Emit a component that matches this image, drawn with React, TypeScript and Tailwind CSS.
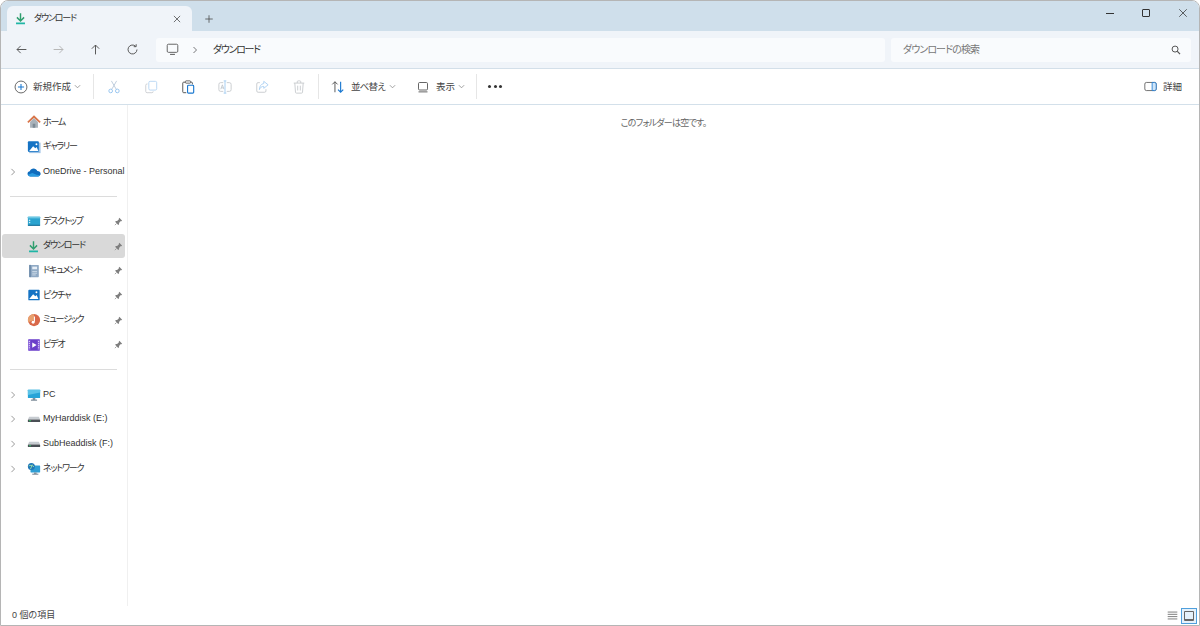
import type { ReactNode } from "react";

const FONT = "font-['Liberation_Sans','Noto_Sans_CJK_JP',sans-serif] [font-feature-settings:'palt']";

function Svg({ size = 16, className = "", children }: { size?: number; className?: string; children: ReactNode }) {
  return (
    <svg width={size} height={size} viewBox="0 0 16 16" fill="none" className={`shrink-0 ${className}`}>
      {children}
    </svg>
  );
}

function DownloadIcon({ size = 14 }: { size?: number }) {
  return (
    <Svg size={size}>
      <path d="M8 1.5V10.5M3.6 6.6L8 11L12.4 6.6" stroke="#2f9e6e" strokeWidth="1.8" />
      <path d="M2.5 14H13.5" stroke="#1fb6a6" strokeWidth="2" />
    </Svg>
  );
}

function Chevron({ dim = false }: { dim?: boolean }) {
  return (
    <Svg size={10}>
      <path d="M5.5 3L10.5 8L5.5 13" stroke={dim ? "#8a8a8a" : "#555"} strokeWidth="1.4" />
    </Svg>
  );
}

function Caret() {
  return (
    <Svg size={7}>
      <path d="M2 5L8 11L14 5" stroke="#888" strokeWidth="1.8" />
    </Svg>
  );
}

function NavArrow({ d, color = "#555" }: { d: string; color?: string }) {
  return (
    <div className="flex w-[37px] justify-center">
      <Svg size={13}>
        <path d={d} stroke={color} strokeWidth="1.2" />
      </Svg>
    </div>
  );
}

function HomeIcon() {
  return (
    <Svg size={14}>
      <path d="M3.5 8V14.5H12.5V8L8 3.5Z" fill="#a9b2ba" />
      <path d="M6.5 14.5V10H9.5V14.5Z" fill="#7d8a95" />
      <path d="M1 8.5L8 1.8L15 8.5" stroke="#d9764a" strokeWidth="2" />
    </Svg>
  );
}

function PictureIcon({ back = false }: { back?: boolean }) {
  return (
    <Svg size={14}>
      {back && <rect x="2.5" y="3" width="13" height="12" fill="#9fc3e6" />}
      <rect x={back ? 1 : 1.5} y={back ? 1.5 : 2} width={back ? 12.5 : 13} height={back ? 12 : 12} rx="1" fill="#1573c4" />
      <path d="M2.5 12.5L7 7L9.5 9.5L11 8L13 12.5Z" fill="#fff" />
      <circle cx="10.8" cy="4.8" r="1.1" fill="#fff" />
    </Svg>
  );
}

function CloudIcon() {
  return (
    <Svg size={14}>
      <path d="M4 13C1.8 13 .6 11.5.6 10C.6 8.4 1.8 7.3 3.2 7.2C3.9 5.2 5.6 4 7.6 4C9.5 4 11 5 11.8 6.8C14 6.8 15.6 8.3 15.6 10C15.6 11.7 14.3 13 12.4 13Z" fill="#0f6cbd" />
      <path d="M4 13C2.5 13 1.4 12.2 1 11.2L6 9L11 11L14.8 11.6C14.2 12.5 13.4 13 12.4 13Z" fill="#2a9be0" />
    </Svg>
  );
}

function DesktopIcon() {
  return (
    <Svg size={14}>
      <rect x="1" y="3" width="14" height="10.5" rx="0.8" fill="#2aa3cf" />
      <rect x="1" y="3" width="14" height="2" fill="#6cc7e3" />
      <rect x="2.2" y="6.5" width="1.5" height="1.5" fill="#d5f0f8" />
      <rect x="2.2" y="9" width="1.5" height="1.5" fill="#d5f0f8" />
      <rect x="1" y="12.3" width="14" height="1.2" fill="#1b6f96" />
    </Svg>
  );
}

function DocIcon() {
  return (
    <Svg size={14}>
      <rect x="2.5" y="1" width="11" height="14" rx="0.8" fill="#8fa9c4" />
      <rect x="2.5" y="1" width="2" height="14" fill="#6f8cab" />
      <rect x="6" y="3" width="5.5" height="3" fill="#e6eef6" />
      <path d="M6 8.5H11.5M6 10.5H11.5M6 12.5H10" stroke="#dbe6f0" strokeWidth="0.9" />
    </Svg>
  );
}

function MusicIcon() {
  return (
    <Svg size={14}>
      <circle cx="8" cy="8" r="7" fill="#d9694a" />
      <path d="M8 1A7 7 0 0 0 1.5 10.5L8 8Z" fill="#e8a06e" />
      <path d="M8.5 4V10" stroke="#fff" strokeWidth="1.2" />
      <circle cx="7" cy="10.5" r="1.7" fill="#fff" />
    </Svg>
  );
}

function VideoIcon() {
  return (
    <Svg size={14}>
      <rect x="1.5" y="1.5" width="13" height="13" rx="1" fill="#6b3fc9" />
      <rect x="1.5" y="1.5" width="2.4" height="13" fill="#8a63dd" />
      <rect x="12.1" y="1.5" width="2.4" height="13" fill="#8a63dd" />
      <path d="M6 5L11 8L6 11Z" fill="#fff" />
      <path d="M2.7 3.5V12.5M13.3 3.5V12.5" stroke="#fff" strokeWidth="1" strokeDasharray="1 1.4" />
    </Svg>
  );
}

function PcIcon() {
  return (
    <Svg size={14}>
      <rect x="1" y="2" width="14" height="9.5" rx="0.6" fill="#27a4d8" />
      <path d="M1 2H15V5L1 8Z" fill="#5cc3e8" />
      <rect x="6.5" y="11.5" width="3" height="2" fill="#7b8c99" />
      <rect x="4.5" y="13.3" width="7" height="1.1" fill="#5e7080" />
    </Svg>
  );
}

function DiskIcon() {
  return (
    <Svg size={14}>
      <path d="M2.5 5.5H13.5L15 8.5H1Z" fill="#c7ccd1" />
      <rect x="1" y="8.5" width="14" height="3" rx="0.5" fill="#4a4f55" />
      <rect x="2.2" y="9.5" width="2.4" height="1" fill="#3bd16f" />
    </Svg>
  );
}

function NetworkIcon() {
  return (
    <Svg size={14}>
      <rect x="4" y="4" width="11" height="8" rx="0.5" fill="#2f9ed4" />
      <rect x="8" y="12" width="3" height="1.5" fill="#7b8c99" />
      <rect x="6" y="13.4" width="7" height="1" fill="#5e7080" />
      <circle cx="5" cy="5" r="4" fill="#1f78b8" />
      <path d="M2 4.5C3.5 3.5 6 3.5 8 5.5M4 8L6 3" stroke="#9fe0a8" strokeWidth="1" />
    </Svg>
  );
}

function PinIcon() {
  return (
    <Svg size={9}>
      <path d="M9.5 1.5L14.5 6.5L13 7.5L11.5 7.5L9 10.5V13L7.5 14L2 8.5L3.5 7H5.5L8.5 4.5V3Z" fill="#7f7f7f" />
      <path d="M4.5 11.5L1.5 14.5" stroke="#7f7f7f" strokeWidth="1.2" />
    </Svg>
  );
}

function NavRow({
  icon,
  label,
  expand = false,
  pinned = false,
  active = false,
  latin = false,
}: {
  icon: ReactNode;
  label: string;
  expand?: boolean;
  pinned?: boolean;
  active?: boolean;
  latin?: boolean;
}) {
  return (
    <div className={`flex h-[24.7px] items-center rounded-[3px] pl-[6px] pr-[2px] ${active ? "bg-[#d9d9d9]" : ""}`}>
      <div className="flex w-[18px] shrink-0 justify-start">{expand && <Chevron dim />}</div>
      <div className="flex w-[15px] shrink-0 justify-center">{icon}</div>
      <span className={`ml-[2px] min-w-0 flex-1 whitespace-nowrap text-[9px] text-[#333] ${latin ? "" : "tracking-[-1.2px]"}`}>{label}</span>
      {pinned && <PinIcon />}
    </div>
  );
}

function Divider() {
  return <div className="mx-[8px] my-[12px] h-px bg-[#dcdcdc]" />;
}

function ToolIcon({ children }: { children: ReactNode }) {
  return <div className="flex w-[37px] justify-center">{children}</div>;
}

function BarSep() {
  return <div className="mx-[1px] h-[25px] w-px bg-[#e6e6e6]" />;
}

export default function App() {
  return (
    <div className={`${FONT} flex h-[626px] w-[1200px] flex-col overflow-hidden rounded-t-[8px] border border-[#b5b5b5] bg-white text-[#333]`}>
      {/* tab strip */}
      <div className="flex h-[30px] shrink-0 items-end bg-[#cfdfeb] pl-[6px]">
        <div className="flex h-[25px] w-[185px] items-center rounded-t-[6px] bg-[#f0f4f9] pl-[7px] pr-[10px]">
          <DownloadIcon size={13} />
          <span className="ml-[7px] flex-1 text-[9px] tracking-[-1.2px] text-[#333]">ダウンロード</span>
          <Svg size={10}>
            <path d="M3 3L13 13M13 3L3 13" stroke="#444" strokeWidth="1.2" />
          </Svg>
        </div>
        <div className="ml-[12px] flex h-[25px] items-center">
          <Svg size={10}>
            <path d="M8 2V14M2 8H14" stroke="#444" strokeWidth="1.2" />
          </Svg>
        </div>
        <div className="ml-auto mr-[-2px] flex h-[30px] self-start pt-[6px]">
          <div className="flex h-[12px] w-[36px] items-center justify-center">
            <div className="h-px w-[8px] bg-[#333]" />
          </div>
          <div className="flex h-[12px] w-[36px] items-center justify-center">
            <div className="h-[8px] w-[8px] rounded-[1px] border border-[#333]" />
          </div>
          <div className="flex h-[12px] w-[37px] items-center justify-center">
            <Svg size={10}>
              <path d="M2 2L14 14M14 2L2 14" stroke="#333" strokeWidth="1.2" />
            </Svg>
          </div>
        </div>
      </div>

      {/* address row */}
      <div className="flex h-[38px] shrink-0 items-center border-b border-[#d3dfe9] bg-[#f0f4f9] pl-[2px] pr-[8px]">
        <NavArrow d="M14 8H2.5M7 3.5L2.5 8L7 12.5" />
        <NavArrow d="M2 8H13.5M9 3.5L13.5 8L9 12.5" color="#b5b5b5" />
        <NavArrow d="M8 14V2.5M3.5 7L8 2.5L12.5 7" />
        <NavArrow d="M13.5 8A5.5 5.5 0 1 1 11.8 4M12.5 1.5V4.5H9.5" />
        <div className="ml-[5px] flex h-[24px] flex-1 items-center rounded-[3px] bg-[#f9fbfd] pl-[10px]">
          <Svg size={13}>
            <rect x="1.5" y="1.5" width="13" height="10" rx="1.5" stroke="#555" strokeWidth="1.1" />
            <path d="M5 14H11" stroke="#555" strokeWidth="1.2" />
          </Svg>
          <div className="ml-[12px]">
            <Svg size={8}>
              <path d="M5 2L11 8L5 14" stroke="#555" strokeWidth="1.6" />
            </Svg>
          </div>
          <span className="ml-[14px] text-[10px] tracking-[-1.3px] text-[#333]">ダウンロード</span>
        </div>
        <div className="ml-[6px] flex h-[24px] w-[300px] items-center justify-between rounded-[3px] bg-[#f9fbfd] pl-[12px] pr-[10px]">
          <span className="text-[10px] tracking-[-0.9px] text-[#777]">ダウンロードの検索</span>
          <Svg size={10}>
            <circle cx="6.5" cy="6.5" r="4.8" stroke="#555" strokeWidth="1.6" />
            <path d="M10 10L14.5 14.5" stroke="#555" strokeWidth="1.8" />
          </Svg>
        </div>
      </div>

      {/* command bar */}
      <div className="flex h-[36px] shrink-0 items-center border-b border-[#d3e0ea] bg-white pl-[13px] pr-[17px]">
        <Svg size={14}>
          <circle cx="8" cy="8" r="6.8" stroke="#555" strokeWidth="1" />
          <path d="M8 4.5V11.5M4.5 8H11.5" stroke="#1a78d0" strokeWidth="1.2" />
        </Svg>
        <span className="ml-[5px] pt-[1px] text-[9.5px] text-[#444]">新規作成</span>
        <div className="ml-[3px] mr-[11px]">
          <Caret />
        </div>
        <BarSep />
        <div className="flex">
          <ToolIcon>
            <Svg size={14}>
              <path d="M5 1L10.5 10.5M11 1L5.5 10.5" stroke="#b7c7d8" strokeWidth="1" />
              <circle cx="4.2" cy="12.5" r="2.1" stroke="#8dbfee" strokeWidth="1" />
              <circle cx="11.8" cy="12.5" r="2.1" stroke="#8dbfee" strokeWidth="1" />
            </Svg>
          </ToolIcon>
          <ToolIcon>
            <Svg size={14}>
              <rect x="5.5" y="1.5" width="9" height="10" rx="1.5" stroke="#b3d4f2" strokeWidth="1" />
              <path d="M4 4.5H3.5A1.5 1.5 0 0 0 2 6V13A1.5 1.5 0 0 0 3.5 14.5H9A1.5 1.5 0 0 0 10.5 13" stroke="#c9ccd0" strokeWidth="1" />
            </Svg>
          </ToolIcon>
          <ToolIcon>
            <Svg size={14}>
              <path d="M5 2.5H3A1 1 0 0 0 2 3.5V13.5A1 1 0 0 0 3 14.5H6M11 2.5H12A1 1 0 0 1 13 3.5V5" stroke="#555" strokeWidth="1.1" />
              <rect x="5" y="1" width="6" height="2.6" rx="0.8" stroke="#555" strokeWidth="1" />
              <rect x="7.5" y="6" width="7" height="9" rx="1" stroke="#1a78d0" strokeWidth="1.3" />
            </Svg>
          </ToolIcon>
          <ToolIcon>
            <Svg size={14}>
              <path d="M6 3H3A2 2 0 0 0 1 5V11A2 2 0 0 0 3 13H6M10 3H13A2 2 0 0 1 15 5V11A2 2 0 0 1 13 13H10" stroke="#c5c8cc" strokeWidth="1" />
              <path d="M8 1V15M6.5 1H9.5M6.5 15H9.5" stroke="#9cc8f0" strokeWidth="1" />
              <path d="M3.2 10.5L5 5.5L6.8 10.5M3.9 9H6.1" stroke="#b8c0c8" strokeWidth="0.9" />
            </Svg>
          </ToolIcon>
          <ToolIcon>
            <Svg size={14}>
              <path d="M5.5 3H3.5A1.5 1.5 0 0 0 2 4.5V12.5A1.5 1.5 0 0 0 3.5 14H11A1.5 1.5 0 0 0 12.5 12.5V10.5" stroke="#c5c8cc" strokeWidth="1" />
              <path d="M10 1.5L15 5.5L10 9.5V7.3C7.5 7.3 6 8.5 5 11C5 7.5 6.8 4.5 10 4Z" stroke="#a8cff2" strokeWidth="1" />
            </Svg>
          </ToolIcon>
          <ToolIcon>
            <Svg size={14}>
              <path d="M2 3.5H14M6 3.5V2A1 1 0 0 1 7 1H9A1 1 0 0 1 10 2V3.5" stroke="#c5c8cc" strokeWidth="1" />
              <path d="M3.2 3.5L4 14A1 1 0 0 0 5 15H11A1 1 0 0 0 12 14L12.8 3.5" stroke="#c5c8cc" strokeWidth="1" />
              <path d="M6.5 6.5V12M9.5 6.5V12" stroke="#c5c8cc" strokeWidth="1" />
            </Svg>
          </ToolIcon>
        </div>
        <BarSep />
        <div className="ml-[11px]">
          <Svg size={14}>
            <path d="M4.5 14V2M1.5 5L4.5 2L7.5 5" stroke="#555" strokeWidth="1.1" />
            <path d="M11 2V14M8 11L11 14L14 11" stroke="#1a78d0" strokeWidth="1.3" />
          </Svg>
        </div>
        <span className="ml-[6px] pt-[1px] text-[9.5px] tracking-[-0.8px] text-[#444]">並べ替え</span>
        <div className="ml-[4px]">
          <Caret />
        </div>
        <div className="ml-[21px]">
          <Svg size={12}>
            <rect x="2" y="2" width="12" height="10" rx="1.5" stroke="#555" strokeWidth="1.2" />
            <path d="M2 14.5H14" stroke="#555" strokeWidth="1.2" />
          </Svg>
        </div>
        <span className="ml-[7px] pt-[1px] text-[9.5px] text-[#444]">表示</span>
        <div className="ml-[3px] mr-[10px]">
          <Caret />
        </div>
        <BarSep />
        <div className="ml-[10px] flex gap-[2.5px]">
          <div className="h-[3px] w-[3px] rounded-full bg-[#333]" />
          <div className="h-[3px] w-[3px] rounded-full bg-[#333]" />
          <div className="h-[3px] w-[3px] rounded-full bg-[#333]" />
        </div>
        <div className="ml-auto flex items-center">
          <Svg size={13}>
            <rect x="1" y="3" width="14" height="10" rx="2" stroke="#555" strokeWidth="1" />
            <path d="M10 3H13A2 2 0 0 1 15 5V11A2 2 0 0 1 13 13H10Z" fill="#cfe5f9" stroke="#1a78d0" strokeWidth="1" />
          </Svg>
          <span className="ml-[6px] pt-[1px] text-[9.5px] text-[#444]">詳細</span>
        </div>
      </div>

      {/* main */}
      <div className="flex min-h-0 flex-1">
        <aside className="w-[127px] shrink-0 border-r border-[#f0f0f0] pl-[1px] pr-[2px] pt-[5px]">
          <NavRow icon={<HomeIcon />} label="ホーム" />
          <NavRow icon={<PictureIcon back />} label="ギャラリー" />
          <NavRow icon={<CloudIcon />} label="OneDrive - Personal" expand latin />
          <Divider />
          <NavRow icon={<DesktopIcon />} label="デスクトップ" pinned />
          <NavRow icon={<DownloadIcon size={13} />} label="ダウンロード" pinned active />
          <NavRow icon={<DocIcon />} label="ドキュメント" pinned />
          <NavRow icon={<PictureIcon />} label="ピクチャ" pinned />
          <NavRow icon={<MusicIcon />} label="ミュージック" pinned />
          <NavRow icon={<VideoIcon />} label="ビデオ" pinned />
          <Divider />
          <NavRow icon={<PcIcon />} label="PC" expand latin />
          <NavRow icon={<DiskIcon />} label="MyHarddisk (E:)" expand latin />
          <NavRow icon={<DiskIcon />} label="SubHeaddisk (F:)" expand latin />
          <NavRow icon={<NetworkIcon />} label="ネットワーク" expand />
        </aside>
        <div className="flex-1 pt-[12px] text-center text-[9px] tracking-[-0.75px] text-[#666]">このフォルダーは空です。</div>
      </div>

      {/* status bar */}
      <div className="flex h-[19px] shrink-0 items-center justify-between pl-[11px] pr-[2px]">
        <span className="text-[9px] text-[#444]">0 個の項目</span>
        <div className="flex items-center gap-[3px]">
          <Svg size={11}>
            <path d="M1 3H15M1 6.3H15M1 9.6H15M1 13H15" stroke="#666" strokeWidth="1.2" />
          </Svg>
          <div className="flex h-[16px] w-[16px] items-center justify-center border border-[#4f9fdc] bg-[#e5f1fb]">
            <div className="h-[10px] w-[10px] rounded-[1px] border border-[#666] border-b-2" />
          </div>
        </div>
      </div>
    </div>
  );
}
